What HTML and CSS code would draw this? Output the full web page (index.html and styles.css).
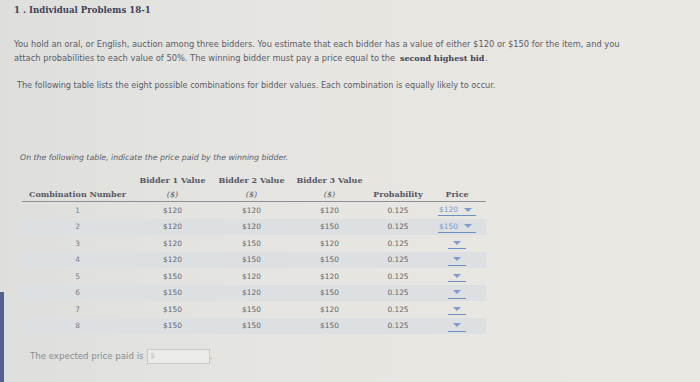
FILE: index.html
```html
<!DOCTYPE html>
<html>
<head>
<meta charset="utf-8">
<link rel="stylesheet" href="styles.css">
</head>
<body>
<div class="edge"></div>
<div class="page">
  <h1 class="title">1 . Individual Problems 18-1</h1>
  <p class="intro">You hold an oral, or English, auction among three bidders. You estimate that each bidder has a value of either $120 or $150 for the item, and you attach probabilities to each value of 50%. The winning bidder must pay a price equal to the <b>second highest bid</b>.</p>
  <p class="note">The following table lists the eight possible combinations for bidder values. Each combination is equally likely to occur.</p>
  <p class="instr">On the following table, indicate the price paid by the winning bidder.</p>
  <table class="grid">
    <colgroup>
      <col class="c1"><col class="c2"><col class="c3"><col class="c4"><col class="c5"><col class="c6">
    </colgroup>
    <thead>
      <tr class="h1row"><th></th><th>Bidder 1 Value</th><th>Bidder 2 Value</th><th>Bidder 3 Value</th><th></th><th></th></tr>
      <tr class="h2row"><th>Combination Number</th><th class="unit">($)</th><th class="unit">($)</th><th class="unit">($)</th><th>Probability</th><th>Price</th></tr>
    </thead>
    <tbody>
      <tr><td>1</td><td>$120</td><td>$120</td><td>$120</td><td>0.125</td><td><span class="dd filled">$120<i class="arrow"></i></span></td></tr>
      <tr class="alt"><td>2</td><td>$120</td><td>$120</td><td>$150</td><td>0.125</td><td><span class="dd filled">$150<i class="arrow"></i></span></td></tr>
      <tr><td>3</td><td>$120</td><td>$150</td><td>$120</td><td>0.125</td><td><span class="dd"><i class="arrow"></i></span></td></tr>
      <tr class="alt"><td>4</td><td>$120</td><td>$150</td><td>$150</td><td>0.125</td><td><span class="dd"><i class="arrow"></i></span></td></tr>
      <tr><td>5</td><td>$150</td><td>$120</td><td>$120</td><td>0.125</td><td><span class="dd"><i class="arrow"></i></span></td></tr>
      <tr class="alt"><td>6</td><td>$150</td><td>$120</td><td>$150</td><td>0.125</td><td><span class="dd"><i class="arrow"></i></span></td></tr>
      <tr><td>7</td><td>$150</td><td>$150</td><td>$120</td><td>0.125</td><td><span class="dd"><i class="arrow"></i></span></td></tr>
      <tr class="alt"><td>8</td><td>$150</td><td>$150</td><td>$150</td><td>0.125</td><td><span class="dd"><i class="arrow"></i></span></td></tr>
    </tbody>
  </table>
  <div class="expected">The expected price paid is <span class="field">$</span>.</div>
</div>
</body>
</html>
```

FILE: styles.css
```css
html, body {
  margin: 0;
  padding: 0;
}
body {
  width: 700px;
  height: 382px;
  overflow: hidden;
  background: linear-gradient(90deg, #dedfdc 0%, #e6e5e1 40%, #eae8e3 100%);
  font-family: "DejaVu Sans", Verdana, sans-serif;
  color: #5a5c66;
  position: relative;
}
.edge {
  position: absolute;
  left: 0;
  top: 292px;
  width: 4px;
  height: 90px;
  background: #55618c;
}
.page {
  padding: 4px 0 0 14px;
}
.title {
  margin: 0;
  font-family: "DejaVu Serif", Georgia, serif;
  font-weight: bold;
  font-size: 8.6px;
  line-height: 12px;
  color: #3e4159;
}
.intro {
  margin: 21px 0 0 0;
  font-size: 8.3px;
  line-height: 14px;
  width: 612px;
}
.intro b {
  display: inline-block;
  font-family: "DejaVu Serif", Georgia, serif;
  font-size: 8px;
  line-height: 12px;
  color: #404350;
  margin: 0 1px 0 2px;
}
.note {
  margin: 13px 0 0 3px;
  font-size: 8.1px;
  line-height: 14px;
}
.instr {
  margin: 59px 0 0 6px;
  font-size: 7.8px;
  line-height: 14px;
  font-style: italic;
}
.grid {
  margin: 7px 0 0 8px;
  border-collapse: collapse;
  table-layout: fixed;
  width: 464px;
  font-size: 7.4px;
}
.c1 { width: 111px; }
.c2 { width: 79px; }
.c3 { width: 79px; }
.c4 { width: 77px; }
.c5 { width: 60px; }
.c6 { width: 58px; }
.grid th {
  font-family: "DejaVu Serif", Georgia, serif;
  font-weight: bold;
  font-size: 8px;
  color: #555866;
  padding: 0;
  text-align: center;
  white-space: nowrap;
}
.h1row th { height: 15px; }
.h2row th {
  height: 14px;
  border-bottom: 1px solid #8e9096;
}
.grid th.unit {
  font-weight: normal;
  font-style: italic;
}
.grid td {
  height: 16.5px;
  padding: 0;
  text-align: center;
  color: #62646c;
}
.grid td:first-child {
  color: #7a7c84;
}
.grid tr.alt td {
  background: #dde0e3;
}
.dd {
  display: inline-flex;
  align-items: center;
  gap: 6px;
  border-bottom: 1px solid #6d8fc2;
  padding: 0 5px;
  height: 11px;
  color: #7a98c9;
  vertical-align: middle;
}
.dd.filled {
  padding: 0 4px 0 1px;
}
.arrow {
  display: inline-block;
  width: 0;
  height: 0;
  border-left: 4px solid transparent;
  border-right: 4px solid transparent;
  border-top: 4px solid #7f9ccb;
}
.expected {
  margin: 14px 0 0 16px;
  font-size: 8.6px;
  line-height: 16px;
  color: #8a8b90;
  display: flex;
  align-items: center;
}
.field {
  display: inline-block;
  box-sizing: border-box;
  width: 63px;
  height: 15px;
  margin-left: 3px;
  border: 1px solid #c9c9c9;
  background: #ebebe8;
  color: #b6b6b6;
  padding-left: 3px;
  line-height: 13px;
  font-size: 7px;
}
```
